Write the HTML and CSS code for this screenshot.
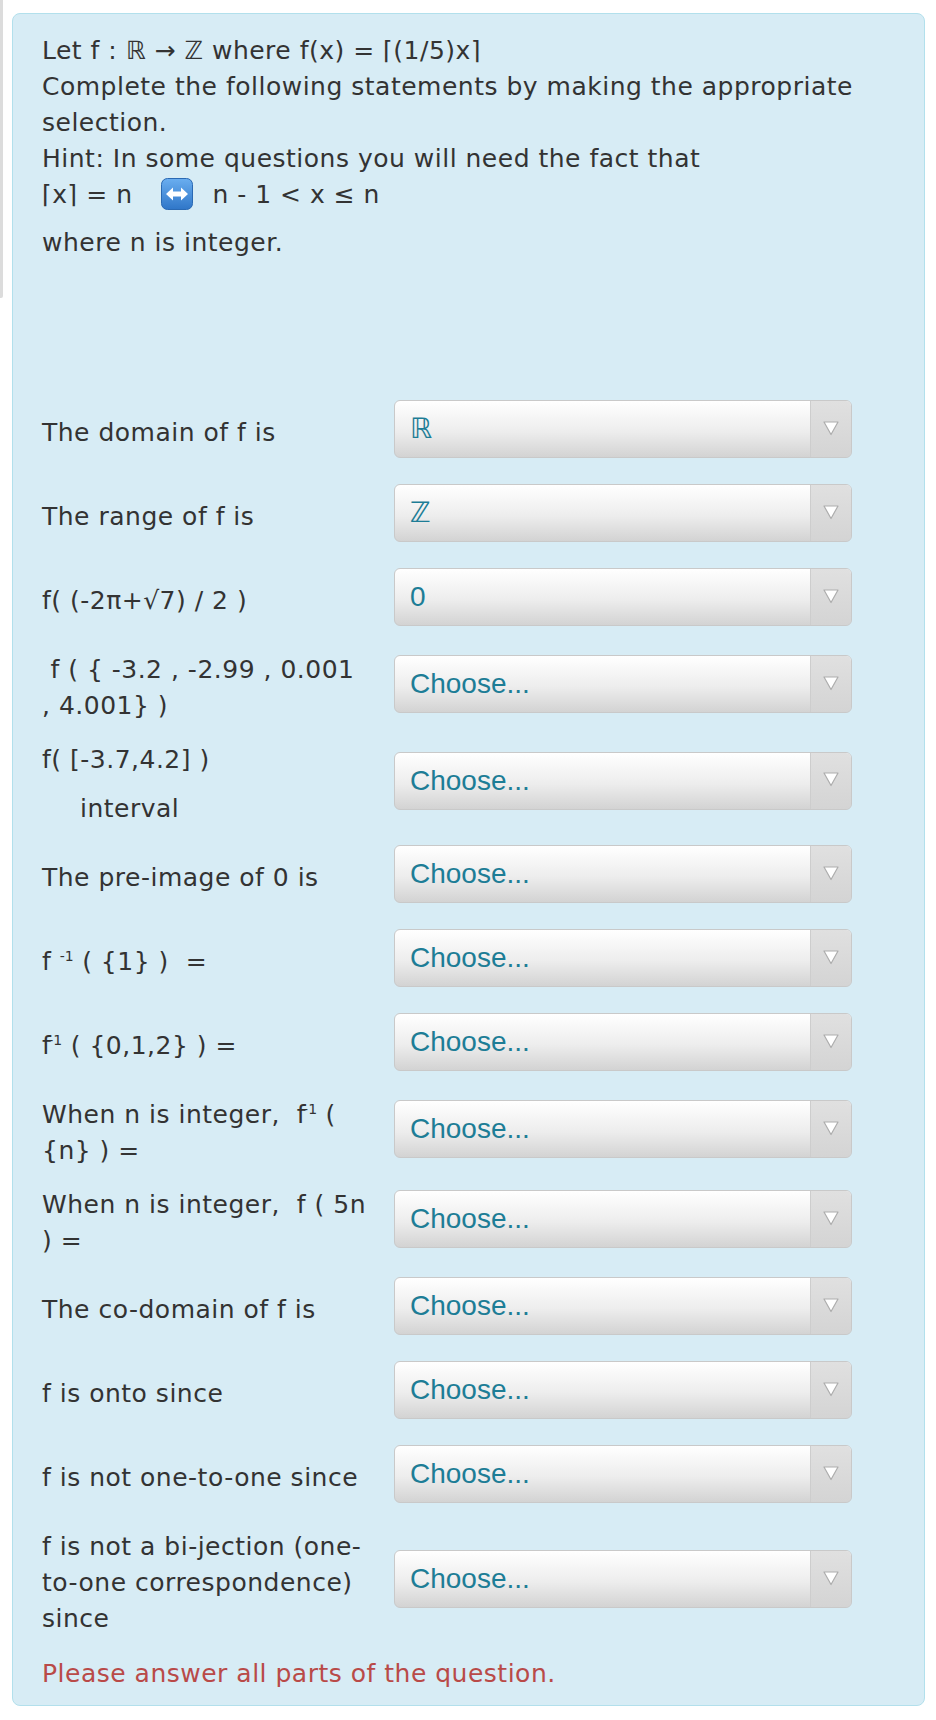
FILE: index.html
```html
<!DOCTYPE html>
<html lang="en">
<head>
<meta charset="utf-8">
<title>Question</title>
<link rel="stylesheet" href="styles.css">
</head>
<body>
<div class="edge-bar"></div>
<div class="panel">
  <p class="intro">Let f : ℝ → ℤ where f(x) = ⌈(1/5)x⌉<br>Complete the following statements by making the appropriate selection.<br>Hint: In some questions you will need the fact that<br>⌈x⌉ = n <span class="emoji"><svg viewBox="0 0 32 32" width="32" height="32"><defs><linearGradient id="eg" x1="0" y1="0" x2="0" y2="1"><stop offset="0" stop-color="#6aaef0"/><stop offset="1" stop-color="#2f76c8"/></linearGradient></defs><rect x="0.5" y="0.5" width="31" height="31" rx="6" fill="url(#eg)" stroke="#2a69b3"/><path d="M5 16 L12 9.5 L12 13.5 L20 13.5 L20 9.5 L27 16 L20 22.5 L20 18.5 L12 18.5 L12 22.5 Z" fill="#ffffff"/></svg></span> n - 1 &lt; x ≤ n</p>
  <p class="intro-end">where n is integer.</p>

  <div class="rows">
    <div class="row">
      <div class="label">The domain of f is</div>
      <div class="select"><span class="value">ℝ</span><span class="arrow"><svg viewBox="0 0 18 16" width="18" height="16"><polygon points="2,2 16,2 9,14.5" fill="#ffffff" stroke="#adadad" stroke-width="1.2" stroke-linejoin="round"/></svg></span></div>
    </div>
    <div class="row">
      <div class="label">The range of f is</div>
      <div class="select"><span class="value">ℤ</span><span class="arrow"><svg viewBox="0 0 18 16" width="18" height="16"><polygon points="2,2 16,2 9,14.5" fill="#ffffff" stroke="#adadad" stroke-width="1.2" stroke-linejoin="round"/></svg></span></div>
    </div>
    <div class="row">
      <div class="label">f( (-2π+√7) / 2 )</div>
      <div class="select"><span class="value">0</span><span class="arrow"><svg viewBox="0 0 18 16" width="18" height="16"><polygon points="2,2 16,2 9,14.5" fill="#ffffff" stroke="#adadad" stroke-width="1.2" stroke-linejoin="round"/></svg></span></div>
    </div>
    <div class="row">
      <div class="label">&nbsp;f ( { -3.2 , -2.99 , 0.001<br>, 4.001} )</div>
      <div class="select"><span class="value">Choose...</span><span class="arrow"><svg viewBox="0 0 18 16" width="18" height="16"><polygon points="2,2 16,2 9,14.5" fill="#ffffff" stroke="#adadad" stroke-width="1.2" stroke-linejoin="round"/></svg></span></div>
    </div>
    <div class="row">
      <div class="label">f( [-3.7,4.2] )<span class="sub-line">interval</span></div>
      <div class="select"><span class="value">Choose...</span><span class="arrow"><svg viewBox="0 0 18 16" width="18" height="16"><polygon points="2,2 16,2 9,14.5" fill="#ffffff" stroke="#adadad" stroke-width="1.2" stroke-linejoin="round"/></svg></span></div>
    </div>
    <div class="row">
      <div class="label">The pre-image of 0 is</div>
      <div class="select"><span class="value">Choose...</span><span class="arrow"><svg viewBox="0 0 18 16" width="18" height="16"><polygon points="2,2 16,2 9,14.5" fill="#ffffff" stroke="#adadad" stroke-width="1.2" stroke-linejoin="round"/></svg></span></div>
    </div>
    <div class="row">
      <div class="label">f <sup>-1</sup> ( {1} ) &nbsp;=</div>
      <div class="select"><span class="value">Choose...</span><span class="arrow"><svg viewBox="0 0 18 16" width="18" height="16"><polygon points="2,2 16,2 9,14.5" fill="#ffffff" stroke="#adadad" stroke-width="1.2" stroke-linejoin="round"/></svg></span></div>
    </div>
    <div class="row">
      <div class="label">f<sup class="tight">-1</sup> ( {0,1,2} ) =</div>
      <div class="select"><span class="value">Choose...</span><span class="arrow"><svg viewBox="0 0 18 16" width="18" height="16"><polygon points="2,2 16,2 9,14.5" fill="#ffffff" stroke="#adadad" stroke-width="1.2" stroke-linejoin="round"/></svg></span></div>
    </div>
    <div class="row">
      <div class="label">When n is integer, &nbsp;f<sup class="tight">-1</sup> (<br>{n} ) =</div>
      <div class="select"><span class="value">Choose...</span><span class="arrow"><svg viewBox="0 0 18 16" width="18" height="16"><polygon points="2,2 16,2 9,14.5" fill="#ffffff" stroke="#adadad" stroke-width="1.2" stroke-linejoin="round"/></svg></span></div>
    </div>
    <div class="row">
      <div class="label">When n is integer, &nbsp;f ( 5n<br>) =</div>
      <div class="select"><span class="value">Choose...</span><span class="arrow"><svg viewBox="0 0 18 16" width="18" height="16"><polygon points="2,2 16,2 9,14.5" fill="#ffffff" stroke="#adadad" stroke-width="1.2" stroke-linejoin="round"/></svg></span></div>
    </div>
    <div class="row">
      <div class="label">The co-domain of f is</div>
      <div class="select"><span class="value">Choose...</span><span class="arrow"><svg viewBox="0 0 18 16" width="18" height="16"><polygon points="2,2 16,2 9,14.5" fill="#ffffff" stroke="#adadad" stroke-width="1.2" stroke-linejoin="round"/></svg></span></div>
    </div>
    <div class="row">
      <div class="label">f is onto since</div>
      <div class="select"><span class="value">Choose...</span><span class="arrow"><svg viewBox="0 0 18 16" width="18" height="16"><polygon points="2,2 16,2 9,14.5" fill="#ffffff" stroke="#adadad" stroke-width="1.2" stroke-linejoin="round"/></svg></span></div>
    </div>
    <div class="row">
      <div class="label">f is not one-to-one since</div>
      <div class="select"><span class="value">Choose...</span><span class="arrow"><svg viewBox="0 0 18 16" width="18" height="16"><polygon points="2,2 16,2 9,14.5" fill="#ffffff" stroke="#adadad" stroke-width="1.2" stroke-linejoin="round"/></svg></span></div>
    </div>
    <div class="row">
      <div class="label">f is not a bi-jection (one-<br>to-one correspondence)<br>since</div>
      <div class="select"><span class="value">Choose...</span><span class="arrow"><svg viewBox="0 0 18 16" width="18" height="16"><polygon points="2,2 16,2 9,14.5" fill="#ffffff" stroke="#adadad" stroke-width="1.2" stroke-linejoin="round"/></svg></span></div>
    </div>
  </div>

  <p class="warning">Please answer all parts of the question.</p>
</div>
</body>
</html>
```

FILE: styles.css
```css
html, body {
  margin: 0;
  padding: 0;
  background: #ffffff;
}

body {
  position: relative;
  font-family: "DejaVu Sans", Verdana, sans-serif;
  font-size: 25px;
  line-height: 36px;
  letter-spacing: 0.5px;
  color: #333333;
}

.edge-bar {
  position: absolute;
  left: 0;
  top: 0;
  width: 3px;
  height: 298px;
  background: #dcdcdc;
  border-radius: 0 0 2px 0;
}

.panel {
  margin: 13px 11px 0 12px;
  border: 1px solid #b2e0ec;
  border-radius: 8px;
  background: #d7ecf5;
  padding: 19px 20px 13px 29px;
}

.intro {
  margin: 0;
}

.emoji {
  display: inline-block;
  width: 32px;
  height: 32px;
  vertical-align: -7px;
  margin: 0 11px 0 20px;
}

.emoji svg {
  display: block;
}

.intro-end {
  margin: 12px 0 0 0;
}

.rows {
  margin-top: 130px;
}

.row {
  display: flex;
  align-items: center;
  padding: 9px 0;
}

.label {
  width: 330px;
  flex: none;
  margin-right: 22px;
}

.sub-line {
  display: block;
  margin-top: 13px;
  padding-left: 38px;
}

sup {
  font-size: 14px;
  line-height: 0;
  vertical-align: 9px;
  letter-spacing: 0;
}

sup.tight {
  margin-left: -3px;
}

.select {
  flex: none;
  display: flex;
  align-items: stretch;
  width: 458px;
  height: 58px;
  box-sizing: border-box;
  margin-bottom: 8px;
  border: 1px solid #c9c9c9;
  border-radius: 6px;
  background: linear-gradient(to bottom, #ffffff 0%, #ededed 55%, #d3d3d3 100%);
  overflow: hidden;
  letter-spacing: 0;
}

.value {
  flex: 1;
  display: flex;
  align-items: center;
  padding-left: 15px;
  font-family: "Liberation Sans", Arial, "DejaVu Sans", sans-serif;
  font-size: 28px;
  color: #1d7d96;
}

.arrow {
  flex: none;
  width: 40px;
  display: flex;
  align-items: center;
  justify-content: center;
  border-left: 1px solid #cdcdcd;
  background: linear-gradient(to bottom, #e0e0e0 0%, #d4d4d4 100%);
}

.arrow svg {
  display: block;
  margin-top: -3px;
}

.warning {
  margin: 10px 0 0 0;
  color: #b94a48;
}
```
